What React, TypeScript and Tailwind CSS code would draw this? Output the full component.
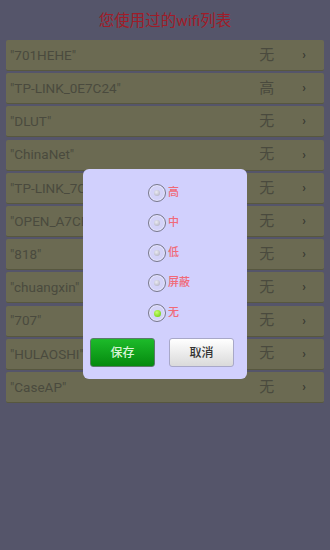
import { useState } from "react";

const networks = [
  { name: '"701HEHE"', level: "无" },
  { name: '"TP-LINK_0E7C24"', level: "高" },
  { name: '"DLUT"', level: "无" },
  { name: '"ChinaNet"', level: "无" },
  { name: '"TP-LINK_7C"', level: "无" },
  { name: '"OPEN_A7CE"', level: "无" },
  { name: '"818"', level: "无" },
  { name: '"chuangxin"', level: "无" },
  { name: '"707"', level: "无" },
  { name: '"HULAOSHI"', level: "无" },
  { name: '"CaseAP"', level: "无" },
];

const options = ["高", "中", "低", "屏蔽", "无"];

export default function App() {
  const [selected, setSelected] = useState("无");

  return (
    <div
      className="relative h-[550px] w-[330px] overflow-hidden bg-[#55556a]"
      style={{ fontFamily: "Roboto, 'Noto Sans CJK SC', sans-serif" }}
    >
      <h1 className="flex h-[40px] items-center justify-center pt-[3px] text-[15.5px] text-[#a01c28]">
        您使用过的wifi列表
      </h1>

      <ul className="flex flex-col gap-[2.2px] px-[6px]">
        {networks.map((n) => (
          <li
            key={n.name}
            className="flex h-[31px] items-center rounded-[2px] border-b border-[#57573f] bg-[#6b6a52] pl-[4px] text-[13.5px] text-[#4a4a3e]"
          >
            <span className="flex-1 truncate">{n.name}</span>
            <span className="w-[20px] text-[15px]">{n.level}</span>
            <span className="ml-[23px] mr-[18px] text-[12px] font-bold text-[#3a3a32]">›</span>
          </li>
        ))}
      </ul>

      {/* dialog */}
      <div className="absolute left-[83px] top-[169px] flex h-[210px] w-[164px] flex-col items-center rounded-[6px] bg-[#d1d0fd] pt-[15px]">
        <div className="flex flex-col gap-[12px] pl-[8px]">
          {options.map((o) => (
            <label
              key={o}
              className="flex h-[18px] cursor-pointer items-center gap-[2px]"
              onClick={() => setSelected(o)}
            >
              <span className="flex h-[18px] w-[18px] items-center justify-center rounded-full border-[1.5px] border-[#77778a] bg-[#d4d3f8] shadow-[inset_0_0_0_1px_#e6e6fc]">
                {selected === o ? (
                  <span className="h-[7px] w-[7px] rounded-full bg-[radial-gradient(circle_at_40%_35%,#c8ff70,#62c800)]" />
                ) : (
                  <span className="h-[6px] w-[6px] rounded-full bg-[radial-gradient(circle_at_40%_35%,#ececf4,#a8a8ba)]" />
                )}
              </span>
              <span className="text-[11px] font-medium text-[#f06a78]">{o}</span>
            </label>
          ))}
        </div>

        <div className="mt-auto mb-[12px] flex w-full justify-between px-[7px]">
          <button className="h-[29px] w-[65px] rounded-[3px] border border-[#5a7a6a] bg-[linear-gradient(#1dbb2a,#058a0f)] text-[12px] font-medium text-[#d8f5d8]">
            保存
          </button>
          <button className="mr-[6px] h-[29px] w-[65px] rounded-[3px] border border-[#a8a8c8] bg-[linear-gradient(#ffffff,#dadada)] text-[12px] font-medium text-[#333]">
            取消
          </button>
        </div>
      </div>
    </div>
  );
}
